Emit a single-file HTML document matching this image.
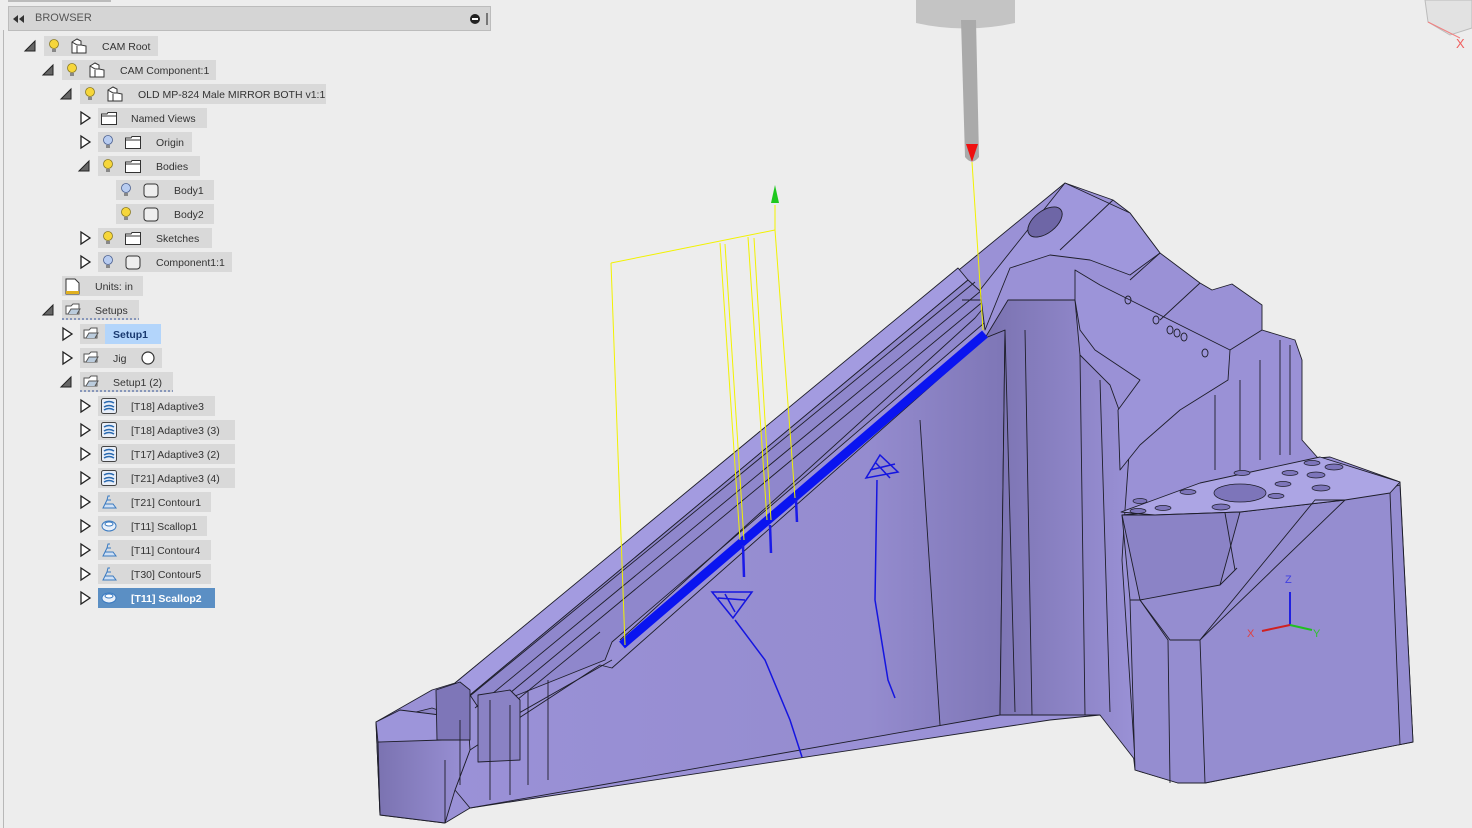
<!DOCTYPE html>
<html><head><meta charset="utf-8"><style>
*{margin:0;padding:0;box-sizing:border-box}
body{width:1472px;height:828px;background:#ededed;position:relative;overflow:hidden;font-family:"Liberation Sans",sans-serif;font-size:11px;color:#333}
svg.m{position:absolute;left:0;top:0}
.hdr{position:absolute;left:8px;top:6px;width:483px;height:25px;background:#d5d5d5;border:1px solid #bcbcbc}
.hdr span{position:absolute;left:26px;top:5px;color:#555;font-size:11px}
.r{position:absolute;height:20px;background:#d9d9d9;line-height:20px;white-space:nowrap}
.tx div{position:absolute;white-space:nowrap;line-height:20px;font-size:10.5px;margin-top:1px}
</style></head><body>
<div style="position:absolute;left:3px;top:30px;width:1px;height:798px;background:#b8b8b8"></div>
<div style="position:absolute;left:8px;top:0;width:103px;height:2px;background:#bbb"></div>

<svg class="m" width="1472" height="828" viewBox="0 0 1472 828">
<defs>
<linearGradient id="g1" x1="0" x2="1"><stop offset="0" stop-color="#9a91d7"/><stop offset=".75" stop-color="#958ccf"/><stop offset="1" stop-color="#7e76b6"/></linearGradient>
<linearGradient id="g2" x1="0" x2="1"><stop offset="0" stop-color="#7a72b0"/><stop offset="1" stop-color="#9a91d6"/></linearGradient>
</defs>
<g stroke="#1e1e2a" stroke-width="0.9" stroke-linejoin="round">
<path d="M376,722 L432,690 L455,683 L1065,183 L1113,200 L1130,213 L1160,253 L1200,283 L1212,290 L1232,284 L1262,305 L1262,330 L1295,340 L1302,360 L1302,440 L1318,458 L1330,457 L1400,482 L1413,742 L1205,783 L1178,783 L1135,770 L1133,752 L1100,715 L1050,720 L470,808 L445,823 L380,815 Z" fill="#9a91d6"/>
<path d="M612,668 L985,338 L1005,330 L1000,715 L470,808 L455,790 L470,750 L600,665 Z" fill="url(#g1)"/>
<path d="M985,338 L1008,300 L1075,300 L1080,355 L1110,385 L1130,440 L1125,510 L1122,560 L1135,760 L1100,715 L1000,715 L1005,330 Z" fill="url(#g2)"/>
<path d="M455,683 L958,268 L968,280 L470,695 Z" fill="#a39be0"/>
<path d="M470,695 L968,280 L990,300 L990,318 L612,642 L605,660 L480,710 Z" fill="#8f87cc"/>
<path d="M962,300 L990,300 L975,318 L620,640" fill="none"/>
<path d="M465,700 L975,282 M475,708 L982,290 M487,712 L985,300 M495,718 L600,632 M498,725 L612,660" fill="none"/>
<path d="M376,722 L432,708 L468,720 L470,750 L455,790 L445,823 L380,815 Z" fill="url(#g2)"/>
<path d="M376,722 L400,710 L440,715 L468,725 L442,740 L378,742 Z" fill="#9d95da"/>
<path d="M436,690 L460,682 L470,690 L470,740 L437,740 Z" fill="#7e76b8"/>
<path d="M478,695 L510,690 L520,700 L520,760 L478,762 Z" fill="#8a82c4"/>
<path d="M378,742 L380,815 M445,760 L445,823 M460,720 L460,785 M490,700 L490,800 M510,705 L510,795 M528,690 L528,785 M548,680 L548,780" fill="none"/>
<path d="M1075,270 L1100,285 L1140,305 L1230,350 L1228,380 L1180,410 L1140,445 L1120,470 L1118,410 L1140,380 L1095,350 L1080,330 L1075,300 Z" fill="#9c94d9"/>
<path d="M1065,183 L1130,213 L1160,253 L1130,275 L1090,260 L1050,255 L1010,268 L985,330 L980,290 Z" fill="#9f97dc"/>
<path d="M1113,200 L1060,250 M1160,253 L1130,280 M1200,283 L1160,320 M1230,350 L1262,330 M1240,380 L1240,470 M1260,360 L1260,460 M1280,340 L1280,455 M1290,345 L1290,455 M1215,395 L1215,470" fill="none"/>
<ellipse cx="1045" cy="222" rx="20" ry="11" transform="rotate(-38 1045 222)" fill="#6e66a6"/>
<ellipse cx="1128" cy="300" rx="3" ry="4" fill="none"/><ellipse cx="1156" cy="320" rx="3" ry="4" fill="none"/>
<ellipse cx="1170" cy="330" rx="3" ry="4" fill="none"/><ellipse cx="1177" cy="333" rx="3" ry="4" fill="none"/><ellipse cx="1184" cy="337" rx="3" ry="4" fill="none"/><ellipse cx="1205" cy="353" rx="3" ry="4" fill="none"/>
<path d="M1122,515 L1155,512 L1240,512 L1345,500 L1400,485 L1413,742 L1205,783 L1178,783 L1135,770 L1130,600 Z" fill="#958dd0"/>
<path d="M1121,512 L1200,483 L1320,457 L1400,482 L1390,493 L1345,500 L1240,512 L1155,515 Z" fill="#aca5e4"/>
<path d="M1122,515 L1140,600 L1220,585 L1240,512 L1155,515 Z" fill="#8b83c6"/>
<path d="M1130,600 L1140,600 L1170,640 L1200,640 L1315,500 L1345,500 L1200,640" fill="none"/>
<path d="M1140,600 L1168,640 L1170,783 M1200,640 L1205,783 M1390,493 L1400,745 M1220,585 L1237,568 M1225,513 L1235,570" fill="none"/>
<g fill="#7d75ba" stroke-width="0.7">
<ellipse cx="1240" cy="493" rx="26" ry="9"/>
<ellipse cx="1138" cy="511" rx="8" ry="2.5"/><ellipse cx="1163" cy="508" rx="8" ry="2.5"/><ellipse cx="1188" cy="492" rx="8" ry="2.5"/><ellipse cx="1140" cy="501" rx="7" ry="2.5"/>
<ellipse cx="1221" cy="507" rx="9" ry="3"/><ellipse cx="1276" cy="496" rx="8" ry="2.5"/><ellipse cx="1242" cy="473" rx="8" ry="2.5"/><ellipse cx="1283" cy="484" rx="8" ry="2.5"/>
<ellipse cx="1290" cy="473" rx="8" ry="2.5"/><ellipse cx="1316" cy="475" rx="9" ry="3"/><ellipse cx="1321" cy="488" rx="9" ry="3"/><ellipse cx="1334" cy="467" rx="9" ry="3"/><ellipse cx="1312" cy="463" rx="8" ry="2.5"/>
</g>
<path d="M920,420 L940,725 M1005,330 L1015,712 M1025,330 L1032,715 M1080,355 L1085,715 M1100,380 L1110,712" fill="none"/>
</g>
<line x1="622" y1="645" x2="985" y2="334" stroke="#0a14f0" stroke-width="9"/>
<g stroke="#1a1ae8" stroke-width="2.5"><line x1="743" y1="545" x2="744" y2="577"/><line x1="770" y1="525" x2="771" y2="553"/><line x1="796" y1="500" x2="797" y2="522"/></g>
<g fill="none" stroke="#1515e0" stroke-width="1.5">
<path d="M880,455 L866,478 L898,472 Z M875,462 L890,478 M870,470 L895,464"/>
<path d="M877,480 L875,600 L888,680 L895,698"/>
<path d="M712,592 L752,592 L733,618 Z M718,598 L745,600 M725,594 L735,612"/>
<path d="M735,620 L765,660 L790,720 L802,757"/>
</g>
<g stroke="#f2f200" stroke-width="1" fill="none">
<path d="M611,263 L775,230 M611,263 L625,645 M720,243 L740,540 M725,244 L744,540 M748,237 L767,520 M754,238 L771,520 M775,230 L795,498 M775,205 L775,230 M972,162 L983,330"/>
</g>
<path d="M775,185 L771,203 L779,203 Z" fill="#1ec81e"/>
<path d="M916,0 L1015,0 L1015,23 Q965,34 916,23 Z" fill="#c4c4c4"/>
<path d="M961,20 L976,20 L979,157 Q972,166 965,157 Z" fill="#aaa"/>
<path d="M966,144 L978,144 L972,162 Z" fill="#f01010"/>
<path d="M1425,0 L1472,0 L1472,28 L1450,35 L1428,22 Z" fill="#e2e2e2" stroke="#bbb"/>
<line x1="1428" y1="22" x2="1460" y2="38" stroke="#f08080"/>
<text x="1456" y="48" font-size="13" fill="#f06060">X</text>
<line x1="1290" y1="625" x2="1290" y2="592" stroke="#2020e0" stroke-width="2"/>
<line x1="1290" y1="625" x2="1262" y2="631" stroke="#d02020" stroke-width="2"/>
<line x1="1290" y1="625" x2="1312" y2="630" stroke="#20c020" stroke-width="2"/>
<text x="1285" y="583" font-size="11" fill="#4040e0">Z</text>
<text x="1247" y="637" font-size="11" fill="#e04040">X</text>
<text x="1313" y="637" font-size="11" fill="#30c030">Y</text>
</svg>

<div class="hdr"><svg style="position:absolute;left:4px;top:8px" width="12" height="8"><path d="M0,4 L5,0 L5,8 Z M6,4 L11,0 L11,8 Z" fill="#333"/></svg><span>BROWSER</span>
<div style="position:absolute;left:461px;top:7px;width:10px;height:10px;border-radius:5px;background:#222"><div style="margin:4px 2px;height:2px;background:#fff"></div></div>
<div style="position:absolute;left:477px;top:6px;width:2px;height:12px;border-left:1px solid #777;border-right:1px solid #777"></div></div>

<svg class="m" width="500" height="620">
<defs>
<g id="down"><path d="M0,10 L10,0 L10,10 Z" fill="#666" stroke="#222"/></g>
<g id="right"><path d="M1,0 L10,6 L1,12 Z" fill="#fff" stroke="#222" stroke-width="1.3"/></g>
<g id="yb"><circle cx="5" cy="5" r="4.5" fill="#f6d63a" stroke="#8a7a20" stroke-width=".8"/><rect x="3" y="10" width="4" height="3" fill="#888"/></g>
<g id="bb"><circle cx="5" cy="5" r="4.5" fill="#b8ccf0" stroke="#4a5f90" stroke-width=".8"/><rect x="3" y="10" width="4" height="3" fill="#888"/></g>
<g id="comp"><path d="M1,3 L6,0 L10,2 L10,6 L15,7 L15,14 L1,14 Z M6,7 L6,14 M1,3 L6,6 L10,6" fill="#fff" stroke="#333"/></g>
<g id="fold"><path d="M0.5,2 L6,2 L7,0.5 L15.5,0.5 L15.5,12.5 L0.5,12.5 Z M0.5,4 L15.5,4" fill="#fff" stroke="#333"/></g>
<g id="body"><rect x="1" y="1" width="14" height="13" rx="3" fill="#eee" stroke="#333"/></g>
<g id="setup"><path d="M1,4 L6,4 L8,2 L14,2 L14,12 L1,12 Z" fill="#fff" stroke="#555"/><path d="M3,12 L6,7 L15,7 L12,12" fill="#bcd" stroke="#555"/></g>
<g id="adap"><rect x="0.5" y="0.5" width="15" height="15" rx="2" fill="#e8eef8" stroke="#444"/><path d="M3,5 Q8,2 13,5 M3,9 Q8,6 13,9 M3,12 Q8,9 13,12" stroke="#2a6ab0" stroke-width="1.6" fill="none"/></g>
<g id="cont"><path d="M2,14 L15,14 L12,10 L4,10 Z M4,10 L6,6 L10,6 M6,6 L7,2 L9,2" fill="#cfe0f5" stroke="#3a7ac0"/></g>
<g id="scal"><ellipse cx="8" cy="8" rx="7" ry="5" fill="#e8f0fa" stroke="#3a7ac0"/><ellipse cx="8" cy="6" rx="4" ry="2" fill="#fff" stroke="#3a7ac0"/></g>
</defs>
</svg>

<div class="r" style="left:44px;top:36px;width:114px"></div>
<div class="r" style="left:62px;top:60px;width:154px"></div>
<div class="r" style="left:80px;top:84px;width:246px"></div>
<div class="r" style="left:98px;top:108px;width:109px"></div>
<div class="r" style="left:98px;top:132px;width:94px"></div>
<div class="r" style="left:98px;top:156px;width:102px"></div>
<div class="r" style="left:116px;top:180px;width:98px"></div>
<div class="r" style="left:116px;top:204px;width:98px"></div>
<div class="r" style="left:98px;top:228px;width:114px"></div>
<div class="r" style="left:98px;top:252px;width:134px"></div>
<div class="r" style="left:62px;top:276px;width:81px"></div>
<div class="r" style="left:62px;top:300px;width:77px"></div>
<div class="r" style="left:80px;top:324px;width:81px"></div>
<div class="r" style="left:105px;top:324px;width:56px;background:#b3d5fb"></div>
<div class="r" style="left:80px;top:348px;width:82px"></div>
<div class="r" style="left:80px;top:372px;width:93px"></div>
<div class="r" style="left:98px;top:396px;width:117px"></div>
<div class="r" style="left:98px;top:420px;width:137px"></div>
<div class="r" style="left:98px;top:444px;width:137px"></div>
<div class="r" style="left:98px;top:468px;width:137px"></div>
<div class="r" style="left:98px;top:492px;width:113px"></div>
<div class="r" style="left:98px;top:516px;width:109px"></div>
<div class="r" style="left:98px;top:540px;width:113px"></div>
<div class="r" style="left:98px;top:564px;width:113px"></div>
<div class="r" style="left:98px;top:588px;width:117px;background:#5b8fc4"></div>

<svg class="m" width="500" height="620">
<use href="#down" x="25" y="41"/><use href="#down" x="43" y="65"/><use href="#down" x="61" y="89"/>
<use href="#right" x="80" y="112"/><use href="#right" x="80" y="136"/><use href="#down" x="79" y="161"/>
<use href="#right" x="80" y="232"/><use href="#right" x="80" y="256"/>
<use href="#down" x="43" y="305"/><use href="#right" x="62" y="328"/><use href="#right" x="62" y="352"/><use href="#down" x="61" y="377"/>
<use href="#right" x="80" y="400"/><use href="#right" x="80" y="424"/><use href="#right" x="80" y="448"/><use href="#right" x="80" y="472"/><use href="#right" x="80" y="496"/><use href="#right" x="80" y="520"/><use href="#right" x="80" y="544"/><use href="#right" x="80" y="568"/><use href="#right" x="80" y="592"/>
<use href="#yb" x="49" y="39"/><use href="#comp" x="71" y="39"/>
<use href="#yb" x="67" y="63"/><use href="#comp" x="89" y="63"/>
<use href="#yb" x="85" y="87"/><use href="#comp" x="107" y="87"/>
<use href="#fold" x="101" y="112"/>
<use href="#bb" x="103" y="135"/><use href="#fold" x="125" y="136"/>
<use href="#yb" x="103" y="159"/><use href="#fold" x="125" y="160"/>
<use href="#bb" x="121" y="183"/><use href="#body" x="143" y="183"/>
<use href="#yb" x="121" y="207"/><use href="#body" x="143" y="207"/>
<use href="#yb" x="103" y="231"/><use href="#fold" x="125" y="232"/>
<use href="#bb" x="103" y="255"/><use href="#body" x="125" y="255"/>
<path d="M66,279 L75,279 L79,283 L79,294 L66,294 Z" fill="#fff" stroke="#333"/><rect x="66" y="291" width="13" height="3" fill="#e0b020"/>
<use href="#setup" x="65" y="302"/><use href="#setup" x="83" y="326"/><use href="#setup" x="83" y="350"/><use href="#setup" x="83" y="374"/>
<circle cx="148" cy="358" r="6" fill="#fff" stroke="#333" stroke-width="1.2"/>
<path d="M62,319 L139,319 M80,391 L173,391" stroke="#6a80b0" stroke-width="1.5" stroke-dasharray="2,2"/>
<use href="#adap" x="101" y="398"/><use href="#adap" x="101" y="422"/><use href="#adap" x="101" y="446"/><use href="#adap" x="101" y="470"/>
<use href="#cont" x="101" y="494"/><use href="#scal" x="101" y="518"/><use href="#cont" x="101" y="542"/><use href="#cont" x="101" y="566"/><use href="#scal" x="101" y="590"/>
</svg>

<div class="tx" style="position:absolute;left:0;top:0;width:400px;height:620px">
<div style="left:102px;top:36px">CAM Root</div>
<div style="left:120px;top:60px">CAM Component:1</div>
<div style="left:138px;top:84px">OLD MP-824 Male MIRROR BOTH v1:1</div>
<div style="left:131px;top:108px">Named Views</div>
<div style="left:156px;top:132px">Origin</div>
<div style="left:156px;top:156px">Bodies</div>
<div style="left:174px;top:180px">Body1</div>
<div style="left:174px;top:204px">Body2</div>
<div style="left:156px;top:228px">Sketches</div>
<div style="left:156px;top:252px">Component1:1</div>
<div style="left:95px;top:276px">Units: in</div>
<div style="left:95px;top:300px">Setups</div>
<div style="left:113px;top:324px;font-weight:bold;color:#1a3a70">Setup1</div>
<div style="left:113px;top:348px">Jig</div>
<div style="left:113px;top:372px">Setup1 (2)</div>
<div style="left:131px;top:396px">[T18] Adaptive3</div>
<div style="left:131px;top:420px">[T18] Adaptive3 (3)</div>
<div style="left:131px;top:444px">[T17] Adaptive3 (2)</div>
<div style="left:131px;top:468px">[T21] Adaptive3 (4)</div>
<div style="left:131px;top:492px">[T21] Contour1</div>
<div style="left:131px;top:516px">[T11] Scallop1</div>
<div style="left:131px;top:540px">[T11] Contour4</div>
<div style="left:131px;top:564px">[T30] Contour5</div>
<div style="left:131px;top:588px;color:#fff;font-weight:bold">[T11] Scallop2</div>
</div>
</body></html>
